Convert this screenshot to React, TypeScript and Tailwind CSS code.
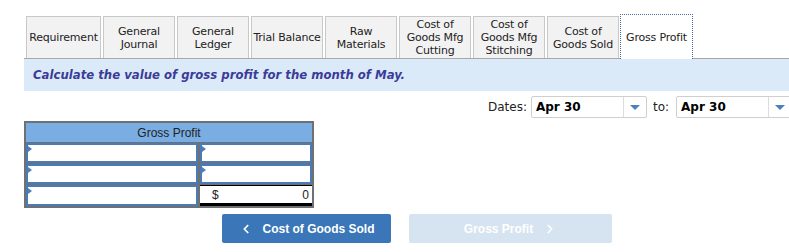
import { ChevronLeft, ChevronRight } from 'lucide-react'

const tabs = [
  { label: 'Requirement', w: 'w-[75px]' },
  { label: 'General Journal', w: 'w-[72px]' },
  { label: 'General Ledger', w: 'w-[72px]' },
  { label: 'Trial Balance', w: 'w-[72px]' },
  { label: 'Raw Materials', w: 'w-[72px]' },
  { label: 'Cost of Goods Mfg Cutting', w: 'w-[72px]' },
  { label: 'Cost of Goods Mfg Stitching', w: 'w-[72px]' },
  { label: 'Cost of Goods Sold', w: 'w-[72px]' },
]

function Marker() {
  return (
    <span className="absolute left-0 top-[1px] w-0 h-0 border-y-[3px] border-y-transparent border-l-[4px] border-l-[#4a7fc1]" />
  )
}

function DateSelect({ value }: { value: string }) {
  return (
    <div className="flex h-[22px] w-[116px] shrink-0 border border-[#cfcfcf] rounded-[2px] bg-white">
      <div className="flex-1 flex items-center pl-[4px] text-[12px] font-bold text-black">{value}</div>
      <div className="w-[23px] border-l border-[#dcdcdc] flex items-center justify-center">
        <span className="w-0 h-0 border-x-[5px] border-x-transparent border-t-[5px] border-t-[#4a7fc1]" />
      </div>
    </div>
  )
}

export default function App() {
  return (
    <div className="w-[789px] h-[252px] overflow-hidden bg-white font-['DejaVu_Sans',Verdana,sans-serif]">
      <div className="pl-[24px] pt-[14px]">
        <div className="flex items-end gap-[2px] pl-[2px] h-[44px]">
          {tabs.map(t => (
            <div
              key={t.label}
              className={`${t.w} h-[42px] shrink-0 flex items-center justify-center text-center bg-[#f2f2f2] border border-b-0 border-[#c8c8c8] text-[11px] leading-[13px] text-[#222] tracking-[-0.2px]`}
            >
              {t.label}
            </div>
          ))}
          <div className="w-[73px] h-[45px] -mb-[1px] -ml-[1px] relative z-10 shrink-0 flex items-center justify-center text-[11px] leading-[13px] text-[#222] tracking-[-0.2px] bg-white border border-dotted border-b-0 border-[#4a6fa5]">
            Gross Profit
          </div>
        </div>
        <div className="h-[33px] border-t border-[#a8a8a8] bg-[#dbeaf8] flex items-center pl-[9px] text-[13px] font-bold italic text-[#3b3b98] font-['DejaVu_Sans_Condensed','DejaVu_Sans',sans-serif]">
          Calculate the value of gross profit for the month of May.
        </div>

        <div className="flex items-center h-[22px] mt-[5px] pl-[464px] text-[12px] text-[#222]">
          <span className="mr-[4px]">Dates:</span>
          <DateSelect value="Apr 30" />
          <span className="ml-[6px] mr-[7px]">to:</span>
          <DateSelect value="Apr 30" />
        </div>

        <div className="mt-[3px] w-[290px] border-2 border-[#6f7074] font-['Liberation_Sans',Arial,sans-serif]">
          <div className="h-[20px] bg-[#7aaee3] flex items-center justify-center text-[12px] text-[#222] border-b border-[#6f7074]">
            Gross Profit
          </div>
          <div className="grid grid-cols-[172px_1fr] gap-x-[2px] gap-y-[1px] bg-[#6f7074]">
            <div className="relative h-[20px] bg-white border-2 border-[#4b7bb5]"><Marker /></div>
            <div className="relative h-[20px] bg-white border-2 border-[#4b7bb5]"><Marker /></div>
            <div className="relative h-[20px] bg-white border-2 border-[#4b7bb5]"><Marker /></div>
            <div className="relative h-[20px] bg-white border-2 border-[#4b7bb5]"><Marker /></div>
            <div className="relative h-[21px] bg-white border-2 border-[#4b7bb5]"><Marker /></div>
            <div className="h-[21px] bg-white border-t border-black border-b-[3px] flex items-center justify-between pl-[12px] pr-[3px] text-[12px] text-[#222]">
              <span>$</span>
              <span>0</span>
            </div>
          </div>
        </div>

        <div className="flex gap-[18px] mt-[6px] pl-[198px] font-['Liberation_Sans',Arial,sans-serif]">
          <button className="w-[169px] h-[29px] rounded-[2px] bg-[#3a76b8] text-white text-[12px] font-bold flex items-center justify-center gap-[10px]">
            <ChevronLeft size={14} strokeWidth={3} />
            Cost of Goods Sold
          </button>
          <button className="w-[203px] h-[29px] rounded-[2px] bg-[#d6e3f1] text-white text-[12px] font-bold flex items-center justify-center gap-[10px]">
            Gross Profit
            <ChevronRight size={14} strokeWidth={3} />
          </button>
        </div>
      </div>
    </div>
  )
}
